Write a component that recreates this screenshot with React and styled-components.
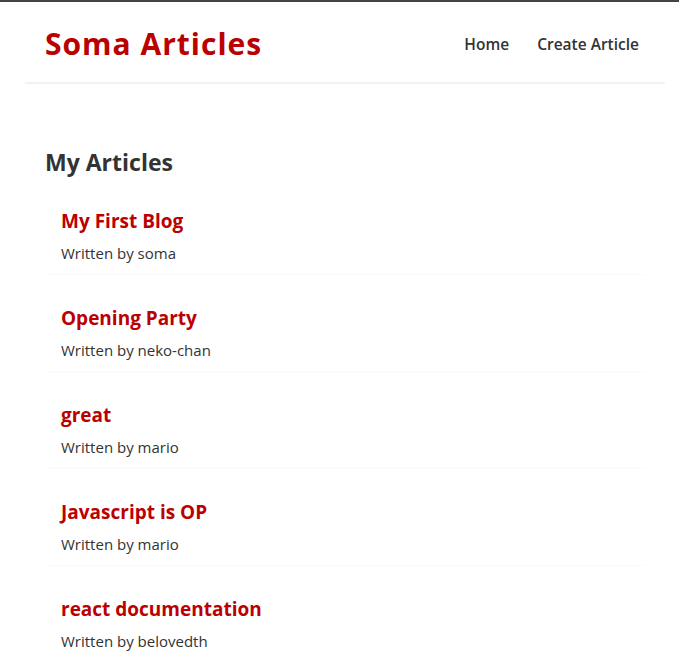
import styled, { createGlobalStyle } from 'styled-components'

const GlobalStyle = createGlobalStyle`
  * {
    margin: 0;
  }
  body {
    margin: 0;
    font-family: "Open Sans", "Noto Sans", sans-serif;
    color: #333;
    background: #fff;
    border-top: 2px solid #444;
  }
`

const Page = styled.div`
  width: 640px;
  margin-left: 25px;
`

const Navbar = styled.nav`
  padding: 22px 20px 19px;
  display: flex;
  align-items: center;
  border-bottom: 2px solid #f2f2f2;
`

const Brand = styled.h1`
  font-size: 30px;
  line-height: 39px;
  font-weight: 700;
  letter-spacing: 1px;
  color: #bb0000;
`

const Links = styled.div`
  margin-left: auto;
  display: flex;
`

const NavLink = styled.a`
  margin-left: 16px;
  padding: 6px;
  font-size: 15.5px;
  font-weight: 600;
  color: #333;
  text-decoration: none;
`

const Content = styled.main`
  margin: 42px 0 40px;
  padding: 20px;
`

const Heading = styled.h2`
  font-size: 23px;
  line-height: 32px;
  font-weight: 700;
  color: #333;
`

const Preview = styled.div`
  padding: 10px 16px;
  margin: 20px 0;
  border-bottom: 1px solid #fafafa;
`

const Title = styled.h2`
  font-size: 19px;
  line-height: 27px;
  font-weight: 700;
  color: #bb0000;
  margin-bottom: 8px;
`

const Author = styled.p`
  font-size: 15px;
  line-height: 21px;
  color: #333;
`

const blogs = [
  { id: 1, title: 'My First Blog', author: 'soma' },
  { id: 2, title: 'Opening Party', author: 'neko-chan' },
  { id: 3, title: 'great', author: 'mario' },
  { id: 4, title: 'Javascript is OP', author: 'mario' },
  { id: 5, title: 'react documentation', author: 'belovedth' },
]

export default function App() {
  return (
    <>
      <GlobalStyle />
      <Page>
        <Navbar>
          <Brand>Soma Articles</Brand>
          <Links>
            <NavLink href="#">Home</NavLink>
            <NavLink href="#">Create Article</NavLink>
          </Links>
        </Navbar>
        <Content>
          <Heading>My Articles</Heading>
          {blogs.map((blog) => (
            <Preview key={blog.id}>
              <Title>{blog.title}</Title>
              <Author>Written by {blog.author}</Author>
            </Preview>
          ))}
        </Content>
      </Page>
    </>
  )
}
